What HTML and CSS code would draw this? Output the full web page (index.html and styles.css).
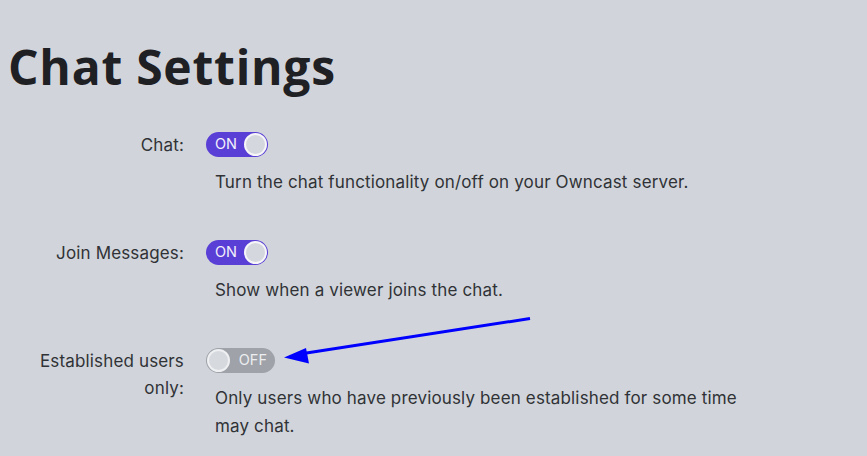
FILE: index.html
```html
<!DOCTYPE html>
<html>
<head>
<meta charset="utf-8">
<link rel="stylesheet" href="styles.css">
</head>
<body>
<div class="page">
  <h1 class="title">Chat Settings</h1>
  <div class="form">
    <div class="row">
      <div class="label">Chat:</div>
      <div class="control">
        <div class="switch-line"><span class="switch on"><span class="switch-text">ON</span><span class="knob"></span></span></div>
        <p class="desc">Turn the chat functionality on/off on your Owncast server.</p>
      </div>
    </div>
    <div class="row">
      <div class="label">Join Messages:</div>
      <div class="control">
        <div class="switch-line"><span class="switch on"><span class="switch-text">ON</span><span class="knob"></span></span></div>
        <p class="desc">Show when a viewer joins the chat.</p>
      </div>
    </div>
    <div class="row">
      <div class="label">Established users<br>only:</div>
      <div class="control">
        <div class="switch-line"><span class="switch off"><span class="knob"></span><span class="switch-text">OFF</span></span></div>
        <p class="desc">Only users who have previously been established for some time<br>may chat.</p>
      </div>
    </div>
  </div>
  <svg class="arrow" width="867" height="456" viewBox="0 0 867 456">
    <line x1="530" y1="318.5" x2="300" y2="354" stroke="#0000ff" stroke-width="3"/>
    <polygon points="284,357.5 306,348 309,363.5" fill="#0000ff"/>
  </svg>
</div>
</body>
</html>
```
FILE: styles.css
```css
html, body {
  margin: 0;
  padding: 0;
  background: #d1d5db;
}
.page {
  position: relative;
  width: 867px;
  height: 456px;
  overflow: hidden;
  padding: 43px 0 0 8px;
  box-sizing: border-box;
  font-family: Inter, "Noto Sans", sans-serif;
  color: #303236;
}
.title {
  margin: 0;
  font-family: "Open Sans", sans-serif;
  font-weight: 700;
  font-size: 48px;
  line-height: 48px;
  letter-spacing: 0.75px;
  color: #1f2023;
}
.form {
  margin-top: 37px;
  display: flex;
  flex-direction: column;
  gap: 40px;
}
.row {
  display: grid;
  grid-template-columns: 176px 1fr;
  column-gap: 22px;
}
.label {
  text-align: right;
  font-size: 17px;
  letter-spacing: 0.15px;
  line-height: 27px;
  padding-top: 4px;
  color: #303236;
}
.control {
  display: flex;
  flex-direction: column;
}
.switch-line {
  height: 32px;
  display: flex;
  align-items: center;
}
.switch {
  display: inline-flex;
  align-items: center;
  height: 25px;
  border-radius: 13px;
  box-sizing: border-box;
  padding: 0 1px;
}
.switch.on {
  background: #5a3fd6;
  width: 62px;
  padding-left: 9px;
  justify-content: space-between;
}
.switch.off {
  background: #9fa2a8;
  width: 69px;
  padding-right: 8px;
  justify-content: space-between;
}
.switch-text {
  color: #f2f0fb;
  font-size: 14.5px;
  line-height: 1;
}
.switch.off .switch-text {
  color: #eceef1;
}
.knob {
  width: 23px;
  height: 23px;
  border-radius: 50%;
  box-sizing: border-box;
  background: #d4d7dd;
  border: 2px solid #f6f6f8;
}
.switch.off .knob {
  border-color: #eef0f2;
  background: #d6d9de;
}
.desc {
  margin: 8px 0 0 9px;
  font-size: 17px;
  letter-spacing: 0.15px;
  line-height: 28px;
  color: #303236;
}
.arrow {
  position: absolute;
  left: 0;
  top: 0;
  pointer-events: none;
}
```
